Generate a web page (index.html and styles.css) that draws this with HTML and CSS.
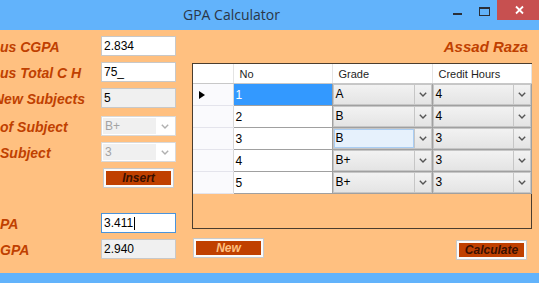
FILE: index.html
```html
<!DOCTYPE html>
<html>
<head>
<meta charset="utf-8">
<link rel="stylesheet" href="styles.css">
</head>
<body>
<div class="window">
  <div class="titlebar">
    <span class="title">GPA Calculator</span>
    <div class="controls">
      <span class="ctl-min"></span>
      <span class="ctl-max"></span>
      <span class="ctl-close">
        <svg width="42" height="20" viewBox="0 0 42 20"><path d="M19 6.5 L26 13.5 M26 6.5 L19 13.5" stroke="#fff" stroke-width="1.8" fill="none"/></svg>
      </span>
    </div>
  </div>
  <div class="client">
    <div class="left">
      <div class="row"><span class="lbl">us CGPA</span><div class="tb">2.834</div></div>
      <div class="row"><span class="lbl">us Total C H</span><div class="tb">75_</div></div>
      <div class="row"><span class="lbl lbl-cut">New Subjects</span><div class="tb ro">5</div></div>
      <div class="row row-combo"><span class="lbl">of Subject</span>
        <div class="cbx"><span class="cbx-text">B+</span><span class="cbx-arrow"><svg width="8" height="5" viewBox="0 0 8 5"><path d="M0.8 0.8 L4 4 L7.2 0.8" stroke="#b0b0b0" stroke-width="1.4" fill="none"/></svg></span></div>
      </div>
      <div class="row"><span class="lbl">Subject</span>
        <div class="cbx"><span class="cbx-text">3</span><span class="cbx-arrow"><svg width="8" height="5" viewBox="0 0 8 5"><path d="M0.8 0.8 L4 4 L7.2 0.8" stroke="#b0b0b0" stroke-width="1.4" fill="none"/></svg></span></div>
      </div>
      <div class="row row-btn"><div class="btn"><span class="btn-face">Insert</span></div></div>
      <div class="row row-gpa"><span class="lbl">PA</span><div class="tb focus">3.411<span class="caret"></span></div></div>
      <div class="row"><span class="lbl">GPA</span><div class="tb ro">2.940</div></div>
    </div>
    <div class="right">
      <div class="name">Assad Raza</div>
      <div class="grid">
        <table>
          <colgroup><col class="c-rh"><col class="c-no"><col class="c-grade"><col class="c-ch"></colgroup>
          <thead>
            <tr><th class="rh"></th><th>No</th><th>Grade</th><th>Credit Hours</th></tr>
          </thead>
          <tbody>
            <tr><td class="rh"><svg width="6" height="8" viewBox="0 0 6 8"><path d="M0 0 L6 4 L0 8 Z" fill="#000"/></svg></td><td class="no sel">1</td>
              <td class="cmb"><div class="cc"><span class="cc-text">A</span><span class="cc-arrow"><svg width="8" height="5" viewBox="0 0 8 5"><path d="M0.8 0.8 L4 4 L7.2 0.8" stroke="#555" stroke-width="1.4" fill="none"/></svg></span></div></td>
              <td class="cmb"><div class="cc"><span class="cc-text">4</span><span class="cc-arrow"><svg width="8" height="5" viewBox="0 0 8 5"><path d="M0.8 0.8 L4 4 L7.2 0.8" stroke="#555" stroke-width="1.4" fill="none"/></svg></span></div></td></tr>
            <tr><td class="rh"></td><td class="no">2</td>
              <td class="cmb"><div class="cc"><span class="cc-text">B</span><span class="cc-arrow"><svg width="8" height="5" viewBox="0 0 8 5"><path d="M0.8 0.8 L4 4 L7.2 0.8" stroke="#555" stroke-width="1.4" fill="none"/></svg></span></div></td>
              <td class="cmb"><div class="cc"><span class="cc-text">4</span><span class="cc-arrow"><svg width="8" height="5" viewBox="0 0 8 5"><path d="M0.8 0.8 L4 4 L7.2 0.8" stroke="#555" stroke-width="1.4" fill="none"/></svg></span></div></td></tr>
            <tr><td class="rh"></td><td class="no">3</td>
              <td class="cmb"><div class="cc hover"><span class="cc-text">B</span><span class="cc-arrow"><svg width="8" height="5" viewBox="0 0 8 5"><path d="M0.8 0.8 L4 4 L7.2 0.8" stroke="#555" stroke-width="1.4" fill="none"/></svg></span></div></td>
              <td class="cmb"><div class="cc"><span class="cc-text">3</span><span class="cc-arrow"><svg width="8" height="5" viewBox="0 0 8 5"><path d="M0.8 0.8 L4 4 L7.2 0.8" stroke="#555" stroke-width="1.4" fill="none"/></svg></span></div></td></tr>
            <tr><td class="rh"></td><td class="no">4</td>
              <td class="cmb"><div class="cc"><span class="cc-text">B+</span><span class="cc-arrow"><svg width="8" height="5" viewBox="0 0 8 5"><path d="M0.8 0.8 L4 4 L7.2 0.8" stroke="#555" stroke-width="1.4" fill="none"/></svg></span></div></td>
              <td class="cmb"><div class="cc"><span class="cc-text">3</span><span class="cc-arrow"><svg width="8" height="5" viewBox="0 0 8 5"><path d="M0.8 0.8 L4 4 L7.2 0.8" stroke="#555" stroke-width="1.4" fill="none"/></svg></span></div></td></tr>
            <tr><td class="rh"></td><td class="no">5</td>
              <td class="cmb"><div class="cc"><span class="cc-text">B+</span><span class="cc-arrow"><svg width="8" height="5" viewBox="0 0 8 5"><path d="M0.8 0.8 L4 4 L7.2 0.8" stroke="#555" stroke-width="1.4" fill="none"/></svg></span></div></td>
              <td class="cmb"><div class="cc"><span class="cc-text">3</span><span class="cc-arrow"><svg width="8" height="5" viewBox="0 0 8 5"><path d="M0.8 0.8 L4 4 L7.2 0.8" stroke="#555" stroke-width="1.4" fill="none"/></svg></span></div></td></tr>
          </tbody>
        </table>
      </div>
      <div class="actions">
        <div class="btn btn-new"><span class="btn-face">New</span></div>
        <div class="btn btn-calc"><span class="btn-face">Calculate</span></div>
      </div>
    </div>
  </div>
  <div class="bottom"></div>
</div>
</body>
</html>
```

FILE: styles.css
```css
html, body {
  margin: 0;
  padding: 0;
}
body {
  width: 539px;
  height: 283px;
  overflow: hidden;
  font-family: "Liberation Sans", Arial, sans-serif;
}
.window {
  display: flex;
  flex-direction: column;
  height: 283px;
}
.titlebar {
  height: 30px;
  flex: none;
  background: #62b3fb;
  display: flex;
  align-items: flex-start;
}
.title {
  margin-left: 183px;
  margin-top: 5px;
  font-family: "Open Sans", "Noto Sans", sans-serif;
  font-size: 14px;
  line-height: 20px;
  color: #2a3646;
}
.controls {
  margin-left: auto;
  display: flex;
  align-items: flex-start;
}
.ctl-min {
  width: 9px;
  height: 2px;
  margin-top: 13px;
  margin-right: 17px;
  background: #2a2f38;
}
.ctl-max {
  width: 11px;
  height: 9px;
  box-sizing: border-box;
  margin-top: 7px;
  margin-right: 7px;
  border: 1px solid #2a2f38;
  border-top-width: 2px;
}
.ctl-close {
  width: 42px;
  height: 20px;
  background: #c75050;
  display: flex;
}
.client {
  height: 243px;
  flex: none;
  background: #ffc080;
  display: flex;
}
.bottom {
  height: 10px;
  flex: none;
  background: #62b3fb;
  border-bottom: 1px solid #4f97d8;
}
.left {
  width: 192px;
  flex: none;
  padding-top: 6px;
  display: flex;
  flex-direction: column;
  gap: 6px;
}
.row {
  display: flex;
  align-items: center;
  height: 20px;
}
.row-combo { margin-top: 2px; }
.row-btn { padding-left: 103px; }
.row-gpa { margin-top: 19px; }
.lbl {
  width: 101px;
  flex: none;
  font-style: italic;
  font-weight: bold;
  font-size: 14px;
  color: #c04000;
  white-space: nowrap;
  padding-top: 2px;
}
.lbl-cut {
  margin-left: -6px;
  width: 107px;
}
.tb {
  width: 75px;
  height: 20px;
  box-sizing: border-box;
  border: 1px solid #c8c8c8;
  background: #fff;
  font-size: 12px;
  line-height: 18px;
  padding-left: 2px;
  color: #000;
  display: flex;
  align-items: center;
}
.tb.ro { background: #f0f0f0; }
.tb.focus { border-color: #4a94dc; }
.caret {
  display: inline-block;
  width: 1px;
  height: 13px;
  background: #000;
  margin-left: 1px;
}
.cbx {
  width: 75px;
  height: 20px;
  box-sizing: border-box;
  border: 1px solid #d9d9d9;
  background: #fff;
  padding: 1px;
  display: flex;
}
.cbx-text {
  width: 53px;
  background: #f0f0f0;
  color: #a3a3a3;
  font-size: 12px;
  line-height: 16px;
  padding-left: 2px;
  box-sizing: border-box;
}
.cbx-arrow {
  flex: 1;
  display: flex;
  align-items: center;
  justify-content: center;
}
.btn {
  width: 71px;
  height: 20px;
  box-sizing: border-box;
  border: 1px solid #c9c9c9;
  background: #fbfbfb;
  padding: 2px;
  display: flex;
}
.btn-face {
  flex: 1;
  background: #c04000;
  font-style: italic;
  font-weight: bold;
  font-size: 12px;
  line-height: 14px;
  text-align: center;
  color: #3a1000;
}
.btn-new .btn-face { color: #ffc080; }
.right {
  width: 340px;
  flex: none;
  padding-top: 9px;
  display: flex;
  flex-direction: column;
}
.name {
  height: 16px;
  line-height: 16px;
  margin-bottom: 8px;
  text-align: right;
  padding-right: 4px;
  font-style: italic;
  font-weight: bold;
  font-size: 15px;
  color: #c04000;
}
.grid {
  width: 340px;
  height: 166px;
  box-sizing: border-box;
  border: 1px solid #4b3d2e;
  background: #ffc080;
}
table {
  border-collapse: collapse;
  table-layout: fixed;
  width: 338px;
  font-size: 12px;
}
.c-rh { width: 40px; }
.c-no { width: 99px; }
.c-grade { width: 100px; }
.c-ch { width: 99px; }
th {
  height: 19px;
  padding: 0 0 0 6px;
  text-align: left;
  font-weight: normal;
  font-size: 11px;
  color: #1e1e1e;
  background: #fff;
  border-bottom: 1px solid #c8c8c8;
  border-right: 1px solid #e4e4e4;
}
td {
  height: 21px;
  padding: 0;
}
td.rh {
  background: #fafafd;
  border-bottom: 1px solid #e4e4ec;
  border-right: 1px solid #d8d8d8;
  padding-left: 6px;
  line-height: 0;
}
td.no {
  background: #fff;
  border: 1px solid #a0a0a0;
  padding-left: 2px;
  color: #000;
}
td.no.sel {
  background: #3399ff;
  color: #fff;
}
td.cmb {
  border: 1px solid #a0a0a0;
}
.cc {
  height: 21px;
  box-sizing: border-box;
  display: flex;
  border: 1px solid #c6c6c6;
  background: linear-gradient(#f2f2f2, #e4e4e4);
}
.cc-text {
  flex: 1;
  line-height: 19px;
  padding-left: 2px;
  color: #000;
}
.cc.hover .cc-text {
  background: #e6f1fc;
  box-shadow: inset 0 0 0 1px #a9cdf3;
}
.cc-arrow {
  width: 16px;
  border-left: 1px solid #c6c6c6;
  display: flex;
  align-items: center;
  justify-content: center;
}
.actions {
  display: flex;
  justify-content: space-between;
  align-items: flex-start;
  margin-top: 9px;
  padding-left: 1px;
  padding-right: 5px;
}
.btn-calc { margin-top: 2px; }
```
